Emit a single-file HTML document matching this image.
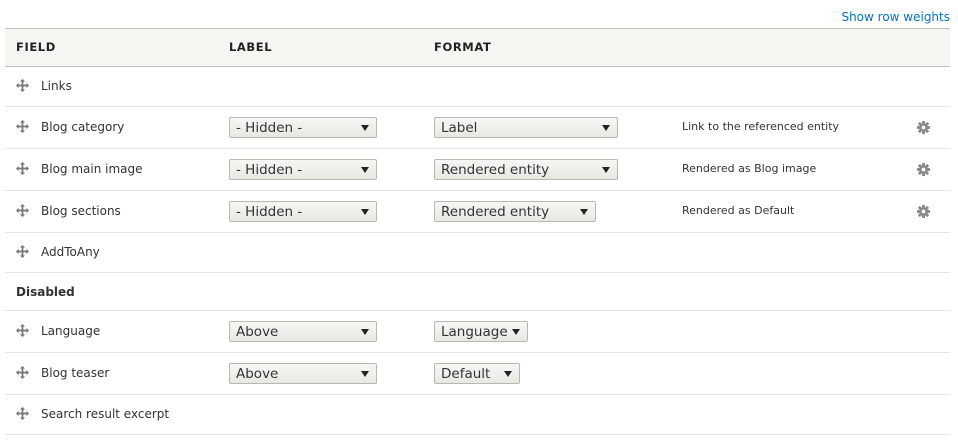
<!DOCTYPE html><html><head><style>
body{margin:0;width:958px;height:440px;background:#fff;font-family:"DejaVu Sans","Liberation Sans",sans-serif;color:#222;position:relative;overflow:hidden}
.a{position:absolute}
.hl{position:absolute;left:5px;width:945px;height:1px;background:#e6e4df}
.t{position:absolute;font-size:12px;color:#333;line-height:16px}
.h{position:absolute;font-size:11.5px;font-weight:bold;letter-spacing:0.6px;color:#222;top:40px}
.sel{position:absolute;height:19px;border:1px solid #b8b8b0;border-radius:2px;background:linear-gradient(#f6f6f3,#e8e8e3);font-size:13.5px;line-height:20px;padding-left:6px;box-sizing:content-box;color:#333}
.sel:after{content:"";position:absolute;right:7px;top:7px;border-left:4px solid transparent;border-right:4px solid transparent;border-top:6px solid #222}
.s{position:absolute;font-size:11px;color:#333;left:682px}
.g{position:absolute;left:916px;width:15px;height:15px}
.d{position:absolute;left:16px;width:13px;height:13px}
</style></head><body>
<div class="a" style="right:8px;top:10px;font-size:12px;color:#0074bd">Show row weights</div>
<div class="a" style="left:5px;top:28px;width:945px;height:39px;background:#f5f5f2;border-top:1px solid #bfbfba;border-bottom:1px solid #bfbfba;box-sizing:border-box"></div>
<div class="h" style="left:16px">FIELD</div><div class="h" style="left:229px">LABEL</div><div class="h" style="left:434px">FORMAT</div>
<div class="hl" style="top:106px"></div><div class="hl" style="top:148px"></div><div class="hl" style="top:190px"></div><div class="hl" style="top:232px"></div><div class="hl" style="top:272px"></div><div class="hl" style="top:310px"></div><div class="hl" style="top:352px"></div><div class="hl" style="top:394px"></div><div class="hl" style="top:434px"></div>
<svg width="0" height="0" style="position:absolute"><defs>
<symbol id="dr" viewBox="0 0 15 15"><path d="M7.5 1v13M1 7.5h13" stroke="#777" stroke-width="2"/><path d="M7.5 0l3 3h-6zM7.5 15l3-3h-6zM0 7.5l3-3v6zM15 7.5l-3-3v6z" fill="#777"/></symbol>
<symbol id="gr" viewBox="0 0 16 16"><g fill="#888"><circle cx="8" cy="8" r="4.5"/><rect x="6.5" y="1" width="3" height="14"/><rect x="1" y="6.5" width="14" height="3"/><rect x="6.5" y="1" width="3" height="14" transform="rotate(45 8 8)"/><rect x="6.5" y="1" width="3" height="14" transform="rotate(-45 8 8)"/></g><circle cx="8" cy="8" r="2" fill="#fff"/></symbol>
</defs></svg>
<svg class="d" style="top:79px"><use href="#dr"/></svg><div class="t" style="left:41px;top:78px">Links</div>
<svg class="d" style="top:120px"><use href="#dr"/></svg><div class="t" style="left:41px;top:119px">Blog category</div>
<div class="sel" style="left:229px;top:117px;width:140px">- Hidden -</div><div class="sel" style="left:434px;top:117px;width:176px">Label</div>
<div class="s" style="top:120px">Link to the referenced entity</div><svg class="g" style="top:120px"><use href="#gr"/></svg>
<svg class="d" style="top:162px"><use href="#dr"/></svg><div class="t" style="left:41px;top:161px">Blog main image</div>
<div class="sel" style="left:229px;top:159px;width:140px">- Hidden -</div><div class="sel" style="left:434px;top:159px;width:176px">Rendered entity</div>
<div class="s" style="top:162px">Rendered as Blog image</div><svg class="g" style="top:162px"><use href="#gr"/></svg>
<svg class="d" style="top:204px"><use href="#dr"/></svg><div class="t" style="left:41px;top:203px">Blog sections</div>
<div class="sel" style="left:229px;top:201px;width:140px">- Hidden -</div><div class="sel" style="left:434px;top:201px;width:154px">Rendered entity</div>
<div class="s" style="top:204px">Rendered as Default</div><svg class="g" style="top:204px"><use href="#gr"/></svg>
<svg class="d" style="top:245px"><use href="#dr"/></svg><div class="t" style="left:41px;top:244px">AddToAny</div>
<div class="t" style="left:16px;top:284px;font-weight:bold">Disabled</div>
<svg class="d" style="top:324px"><use href="#dr"/></svg><div class="t" style="left:41px;top:323px">Language</div>
<div class="sel" style="left:229px;top:321px;width:140px">Above</div><div class="sel" style="left:434px;top:321px;width:86px">Language</div>
<svg class="d" style="top:366px"><use href="#dr"/></svg><div class="t" style="left:41px;top:365px">Blog teaser</div>
<div class="sel" style="left:229px;top:363px;width:140px">Above</div><div class="sel" style="left:434px;top:363px;width:78px">Default</div>
<svg class="d" style="top:407px"><use href="#dr"/></svg><div class="t" style="left:41px;top:406px">Search result excerpt</div>
</body></html>
